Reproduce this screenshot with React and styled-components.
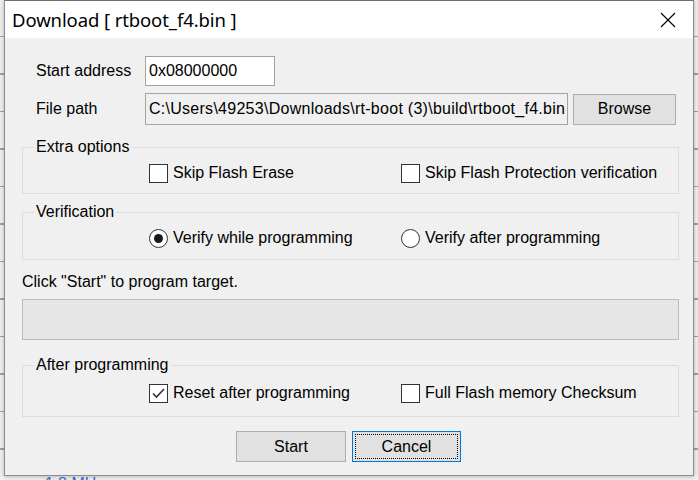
import React from "react";
import styled, { createGlobalStyle } from "styled-components";

const GlobalStyle = createGlobalStyle`
  html, body { margin: 0; padding: 0; }
  body { background: #ececec; font-family: "Liberation Sans", Arial, sans-serif; }
  * { box-sizing: border-box; }
`;

const Desktop = styled.div`
  position: relative;
  width: 698px;
  height: 480px;
  overflow: hidden;
`;

const BackApp = styled.div`
  width: 100%;
  height: 100%;
  display: flex;
  flex-direction: column;
  justify-content: flex-end;
  background-color: #eeeeee;
  background-image: repeating-linear-gradient(
    to bottom,
    transparent 0px,
    transparent 36px,
    #a0a0a0 36px,
    #a0a0a0 37.5px
  );
`;

const BackText = styled.div`
  height: 8px;
  overflow: hidden;
  padding-left: 2px;
  color: #555;
  font-size: 16px;
  line-height: 16px;
  margin-bottom: -4px;
  background: #f2f2f2;
`;

const BackValue = styled.span`
  color: #3b6fd6;
`;

const Window = styled.div`
  position: absolute;
  left: 4px;
  top: 0;
  width: 690px;
  height: 476px;
  background: #f0f0f0;
  border: 1px solid #8c8c8c;
  border-top-color: #6f6f6f;
  display: flex;
  flex-direction: column;
  box-shadow: 0 1px 4px rgba(0, 0, 0, 0.25);
`;

const TitleBar = styled.div`
  height: 37px;
  background: #ffffff;
  display: flex;
  align-items: center;
  padding-left: 7px;
  flex-shrink: 0;
`;

const Title = styled.div`
  flex: 1;
  font-family: "Noto Sans", "Open Sans", sans-serif;
  font-size: 18.5px;
  color: #000;
  letter-spacing: -0.1px;
  padding-bottom: 1px;
`;

const CloseButton = styled.div`
  width: 50px;
  height: 37px;
  display: flex;
  align-items: center;
  justify-content: center;
`;

const Body = styled.div`
  flex: 1;
  display: flex;
  flex-direction: column;
  padding: 0 14px 0 17px;
  font-size: 16px;
  color: #000;
`;

const FieldRow = styled.div`
  display: flex;
  align-items: center;
  padding-left: 14px;
  margin-top: ${(p) => p.$mt}px;
  height: ${(p) => p.$h}px;
`;

const FieldLabel = styled.div`
  width: 109px;
  line-height: 18px;
`;

const TextBox = styled.div`
  width: ${(p) => p.$w}px;
  height: ${(p) => p.$h}px;
  border: 1px solid #a3a3a3;
  background: ${(p) => (p.$readOnly ? "#f0f0f0" : "#ffffff")};
  display: flex;
  align-items: center;
  padding-left: 3px;
  white-space: nowrap;
  overflow: hidden;
  line-height: 18px;
  letter-spacing: ${(p) => (p.$readOnly ? "0.27px" : "0")};
`;

const Button = styled.div`
  width: ${(p) => p.$w}px;
  height: 31px;
  background: #e1e1e1;
  border: 1px solid ${(p) => (p.$focused ? "#0078d7" : "#adadad")};
  display: flex;
  align-items: center;
  justify-content: center;
  padding: 2px;
  margin-left: ${(p) => p.$ml || 0}px;
`;

const ButtonInner = styled.div`
  width: 100%;
  height: 100%;
  display: flex;
  align-items: center;
  justify-content: center;
  border: 1px dotted ${(p) => (p.$focused ? "#000" : "transparent")};
  line-height: 18px;
`;

const Group = styled.fieldset`
  margin: ${(p) => p.$mt}px 0 0 0;
  padding: ${(p) => p.$pt}px 0 ${(p) => p.$pb}px 0;
  border: 1px solid #dcdcdc;
  min-width: 0;
`;

const Legend = styled.legend`
  margin-left: 11px;
  padding: 0 2px;
  line-height: 18px;
  font-size: 16px;
`;

const OptionGrid = styled.div`
  display: grid;
  grid-template-columns: 252px auto;
  padding-left: 126px;
  height: 20px;
  align-items: center;
`;

const Option = styled.div`
  display: flex;
  align-items: center;
  gap: 5px;
  line-height: 18px;
  white-space: nowrap;
`;

const Box = styled.span`
  width: 19px;
  height: 19px;
  border: 1px solid #333333;
  background: #ffffff;
  display: inline-flex;
  align-items: center;
  justify-content: center;
  flex-shrink: 0;
`;

const Radio = styled.span`
  width: 19px;
  height: 19px;
  border: 1px solid #333333;
  border-radius: 50%;
  background: #ffffff;
  display: inline-flex;
  align-items: center;
  justify-content: center;
  flex-shrink: 0;
  &::after {
    content: "";
    width: 9px;
    height: 9px;
    border-radius: 50%;
    background: ${(p) => (p.$checked ? "#1a1a1a" : "transparent")};
  }
`;

const StatusText = styled.div`
  margin-top: 13px;
  line-height: 18px;
`;

const Progress = styled.div`
  margin-top: 8px;
  height: 41px;
  background: #e6e6e6;
  border: 1px solid #bcbcbc;
`;

const ButtonRow = styled.div`
  margin-top: 14px;
  display: flex;
  justify-content: center;
  padding-right: 4px;
`;

function CheckBox({ checked, label }) {
  return (
    <Option>
      <Box>
        {checked && (
          <svg width="15" height="15" viewBox="0 0 15 15">
            <polyline
              points="2,7.5 5.5,11 13,3"
              fill="none"
              stroke="#333"
              strokeWidth="1.6"
            />
          </svg>
        )}
      </Box>
      {label}
    </Option>
  );
}

function RadioOption({ checked, label }) {
  return (
    <Option>
      <Radio $checked={checked} />
      {label}
    </Option>
  );
}

export default function App() {
  return (
    <>
      <GlobalStyle />
      <Desktop>
        <BackApp>
          <BackText>
            ency: <BackValue>1.8 MHz</BackValue>
          </BackText>
        </BackApp>
        <Window>
          <TitleBar>
            <Title>Download [ rtboot_f4.bin ]</Title>
            <CloseButton>
              <svg width="16" height="16" viewBox="0 0 16 16">
                <path d="M1 1 L15 15 M15 1 L1 15" stroke="#000" strokeWidth="1.1" fill="none" />
              </svg>
            </CloseButton>
          </TitleBar>
          <Body>
            <FieldRow $mt={18} $h={30}>
              <FieldLabel>Start address</FieldLabel>
              <TextBox $w={130} $h={30}>0x08000000</TextBox>
            </FieldRow>
            <FieldRow $mt={7} $h={32}>
              <FieldLabel>File path</FieldLabel>
              <TextBox $w={423} $h={32} $readOnly>
                C:\Users\49253\Downloads\rt-boot (3)\build\rtboot_f4.bin
              </TextBox>
              <Button $w={103} $ml={5}>
                <ButtonInner>Browse</ButtonInner>
              </Button>
            </FieldRow>
            <Group $mt={13} $pt={7} $pb={10}>
              <Legend>Extra options</Legend>
              <OptionGrid>
                <CheckBox label="Skip Flash Erase" />
                <CheckBox label="Skip Flash Protection verification" />
              </OptionGrid>
            </Group>
            <Group $mt={9} $pt={7} $pb={11}>
              <Legend>Verification</Legend>
              <OptionGrid>
                <RadioOption checked label="Verify while programming" />
                <RadioOption label="Verify after programming" />
              </OptionGrid>
            </Group>
            <StatusText>Click "Start" to program target.</StatusText>
            <Progress />
            <Group $mt={16} $pt={9} $pb={13}>
              <Legend>After programming</Legend>
              <OptionGrid>
                <CheckBox checked label="Reset after programming" />
                <CheckBox label="Full Flash memory Checksum" />
              </OptionGrid>
            </Group>
            <ButtonRow>
              <Button $w={110}>
                <ButtonInner>Start</ButtonInner>
              </Button>
              <Button $w={109} $ml={6} $focused>
                <ButtonInner $focused>Cancel</ButtonInner>
              </Button>
            </ButtonRow>
          </Body>
        </Window>
      </Desktop>
    </>
  );
}
